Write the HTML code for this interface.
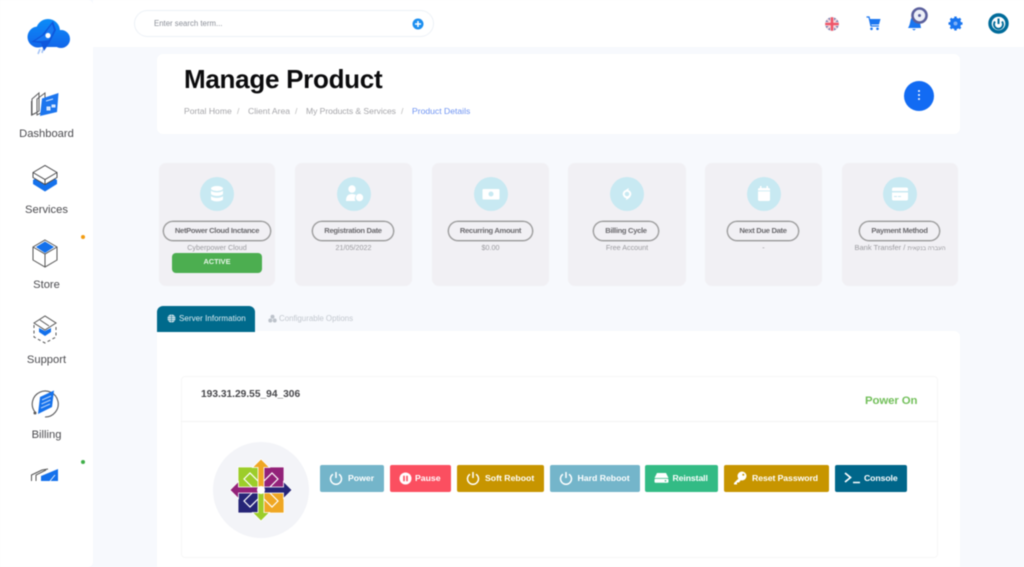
<!DOCTYPE html>
<html lang="en"><head><meta charset="utf-8"><title>Manage Product</title>
<style>
*{box-sizing:border-box}
html,body{margin:0;padding:0;width:1024px;height:567px;overflow:hidden;background:#f7f9fd}
body{font-family:"Liberation Sans","Noto Sans CJK JP",sans-serif;position:relative}
#w{position:absolute;left:0;top:0;width:1024px;height:567px;overflow:hidden;filter:blur(.45px)}
.a{position:absolute}
.t{position:absolute;white-space:nowrap;line-height:1}
.nav{position:absolute;left:0;width:93px;text-align:center;font-size:11.2px;color:#4b4b4f;line-height:1}
.card{position:absolute;top:163px;height:123px;background:#f1f0f4;border-radius:7px}
.circ{position:absolute;top:14px;left:50%;margin-left:-17px;width:34px;height:34px;border-radius:50%;background:#c8e9f2}
.circ svg{position:absolute;left:0;top:0}
.pill{position:absolute;top:58px;height:20px;border:1px solid #989898;border-radius:10px;box-shadow:0 0 0 .4px #999;text-align:center;font-size:7.6px;font-weight:bold;color:#6c6b6f;line-height:18px;white-space:nowrap;letter-spacing:-.32px}
.sub{position:absolute;top:81px;left:-10px;right:-10px;text-align:center;font-size:7.2px;color:#9a9a9e;line-height:1;white-space:nowrap}
.b{position:absolute;top:465px;height:27px;border-radius:2px;color:#fff;font-size:8.7px;font-weight:bold;line-height:27px;white-space:nowrap}
.b span{position:absolute;top:0}
.b svg{position:absolute}
.bc{font-size:8.6px;color:#a6a6aa;top:107px}
</style></head><body>
<div id="w">
<div class="a" style="left:93px;top:0;width:931px;height:47px;background:#fff"></div>
<div class="a" style="left:0;top:0;width:93px;height:567px;background:#fff;border-radius:0 5px 5px 0"></div>

<svg class="a" style="left:20px;top:14px" width="56" height="44" viewBox="0 0 56 44">
<defs><linearGradient id="g" gradientUnits="userSpaceOnUse" x1="0" y1="5" x2="0" y2="34"><stop offset="0" stop-color="#0c8cf8"/><stop offset="1" stop-color="#1266ea"/></linearGradient></defs>
<g fill="url(#g)"><circle cx="18" cy="23" r="10.500"/><circle cx="28" cy="17" r="12"/><circle cx="41" cy="25" r="9"/><rect x="18" y="22" width="23" height="11"/></g>
<path d="M33 7L22 21L11 28L21 29L24 37L30 28L36 16Z" fill="#0e57dc"/>
<path d="M32 10L24 21L15 27L22 27L29 26L34 16Z" fill="#1778f2"/>
<circle cx="28" cy="21.500" r="2.600" fill="#fff"/>
<path d="M20 35L18 40M23 35L22 39" stroke="#a4c4f6" stroke-width="1.600"/>
</svg>

<svg class="a" style="left:28px;top:88px" width="34" height="30" viewBox="0 0 34 30">
<g fill="none" stroke="#5c5c5e" stroke-width="1">
<path d="M4 11L11 5L11 23L4 27Z"/><path d="M3.500 13L3.500 27L8 25"/><path d="M9 11L17 5L17 23L9 27Z"/>
</g>
<path d="M14 10.500L30.500 5L29 24L12 28Z" fill="#1c75ee"/>
<path d="M18 13L25 11M19 19H22V22H19ZM24 17H27V19H24Z" stroke="#dcebff" stroke-width="1" fill="#cfe3ff"/>
</svg>
<div class="nav" style="top:128.500px">Dashboard</div>

<svg class="a" style="left:30px;top:164px" width="30" height="30" viewBox="0 0 30 30">
<path d="M3 16L15 9L27 16V20L15 27.500L3 20Z" fill="#1471ec"/>
<path d="M3 8.500L15 1.500L27 8.500V13.500L15 20.500L3 13.500Z" fill="#fff" stroke="#4c4c4e" stroke-width="1"/>
<path d="M3 8.500L15 15.500L27 8.500M15 15.500V20.500" stroke="#4c4c4e" stroke-width="1" fill="none"/>
</svg>
<div class="nav" style="top:204.500px">Services</div>

<svg class="a" style="left:31px;top:238px" width="28" height="30" viewBox="0 0 28 30">
<path d="M14 2L26 9V22L14 29L2 22V9Z" fill="#fff" stroke="#555" stroke-width="1"/>
<path d="M14 3.500L23 9L14 15L5 9Z" fill="#1471ec"/>
<path d="M2 9L14 16L26 9M14 16V29" stroke="#555" stroke-width="1" fill="none"/>
</svg>
<div class="nav" style="top:279.500px">Store</div>
<div class="a" style="left:81px;top:235px;width:4px;height:4px;border-radius:50%;background:#f39c12"></div>

<svg class="a" style="left:31px;top:314px" width="28" height="30" viewBox="0 0 28 30">
<path d="M3 11V23L14 29L25 23V11" fill="none" stroke="#555" stroke-width="1" stroke-dasharray="3 2.500"/>
<path d="M8 14L14 17L20 14V18L14 22L8 18Z" fill="#1471ec"/>
<path d="M3 9L14 2L25 9L14 16Z" fill="#fff" stroke="#555" stroke-width="1"/>
<path d="M9 6L18 12" stroke="#555" stroke-width="1"/>
</svg>
<div class="nav" style="top:354.500px">Support</div>

<svg class="a" style="left:30px;top:389px" width="30" height="30" viewBox="0 0 30 30">
<path d="M5 23A13 13 0 1 1 15 28" fill="none" stroke="#5a5a5c" stroke-width="1.100"/>
<circle cx="5" cy="24" r="1.500" fill="#5a5a5c"/>
<path d="M10 8L24 1.500L22 18L8 25Z" fill="#1471ec"/>
<path d="M12 11L21 7M11.500 15L20.500 11M11 19L20 15" stroke="#bcd6fb" stroke-width="1"/>
</svg>
<div class="nav" style="top:429.500px">Billing</div>
<div class="a" style="left:81px;top:460px;width:4px;height:4px;border-radius:50%;background:#3fae49"></div>

<svg class="a" style="left:30px;top:466px" width="30" height="15" viewBox="0 0 30 15">
<path d="M1.500 15V9L12 4L18 3" fill="none" stroke="#555" stroke-width="1"/>
<path d="M6 15V9L16 4" fill="none" stroke="#555" stroke-width="1"/>
<path d="M11 15V10L28 3V15Z" fill="#1471ec"/>
<path d="M20 15L25 9" stroke="#fff" stroke-width=".8"/>
</svg>

<div class="a" style="left:134px;top:10px;width:300px;height:27px;border:1px solid #edf1f7;border-radius:14px;background:#fff"></div>
<div class="t" style="left:154px;top:19.500px;font-size:7.800px;color:#8b8f98">Enter search term...</div>
<svg class="a" style="left:412px;top:17.500px" width="12" height="12" viewBox="0 0 12 12"><circle cx="6" cy="6" r="5.500" fill="#1c8ff0"/><path d="M3 6H9M6 3V9" stroke="#fff" stroke-width="1.500"/></svg>

<svg class="a" style="left:825px;top:17px" width="14" height="14" viewBox="0 0 14 14">
<defs><clipPath id="f"><circle cx="7" cy="7" r="6.800"/></clipPath></defs>
<g clip-path="url(#f)"><rect width="14" height="14" fill="#767cae"/>
<path d="M0 0L14 14M14 0L0 14" stroke="#f4d5da" stroke-width="2"/>
<path d="M7 0V14M0 7H14" stroke="#f7e4e6" stroke-width="4"/>
<path d="M7 0V14M0 7H14" stroke="#ef5568" stroke-width="2.600"/></g>
</svg>
<svg class="a" style="left:866px;top:16px" width="15" height="15" viewBox="0 0 15 15">
<path d="M.5 1H3L5 10H13" fill="none" stroke="#1975f0" stroke-width="1.300"/>
<path d="M3.500 3H14.500L13 8.500H4.500Z" fill="#1975f0"/>
<circle cx="5.500" cy="12.800" r="1.300" fill="#1975f0"/><circle cx="11.500" cy="12.800" r="1.300" fill="#1975f0"/>
</svg>
<svg class="a" style="left:906px;top:7px" width="24" height="25" viewBox="0 0 24 25">
<path d="M2 21C4 18 4 15 5 12C6 9 9 9 11 10C13 11 14 15 15 21Z" fill="#1975f0"/>
<path d="M6 22H10L8 23.500Z" fill="#1975f0"/>
<circle cx="13.500" cy="8.500" r="7" fill="#eef0f7" stroke="#5a5f9c" stroke-width="2.600"/>
<circle cx="13.500" cy="8.500" r="1.500" fill="#5a5f9c"/>
</svg>
<svg class="a" style="left:947.500px;top:16px" width="15" height="15" viewBox="0 0 15 15">
<circle cx="7.500" cy="7.500" r="5.600" fill="#1975f0"/>
<path d="M7.500 .5V14.500M.5 7.500H14.500M2.500 2.500L12.500 12.500M12.500 2.500L2.500 12.500" stroke="#1975f0" stroke-width="2.400"/>
<circle cx="7.500" cy="7.500" r="2" fill="#7fb0f7"/>
</svg>
<svg class="a" style="left:987.500px;top:12.500px" width="21" height="21" viewBox="0 0 21 21">
<circle cx="10.500" cy="10.500" r="8.500" fill="#fff" stroke="#006b9a" stroke-width="3.400"/>
<path d="M7 8.500A4.500 4.500 0 1 0 14 8.500" fill="none" stroke="#006b9a" stroke-width="2"/>
<path d="M10.500 5.500V11" stroke="#006b9a" stroke-width="2"/>
</svg>

<div class="a" style="left:157px;top:54px;width:803px;height:80px;background:#fff;border-radius:6px"></div>
<div class="t" style="left:184px;top:66px;font-size:26px;font-weight:bold;color:#0b0b0d;letter-spacing:-.28px">Manage Product</div>
<div class="t bc" style="left:184px">Portal Home</div>
<div class="t bc" style="left:237px;color:#bbb">/</div>
<div class="t bc" style="left:248px">Client Area</div>
<div class="t bc" style="left:295px;color:#bbb">/</div>
<div class="t bc" style="left:306px;letter-spacing:-.06px">My Products &amp; Services</div>
<div class="t bc" style="left:401px;color:#bbb">/</div>
<div class="t bc" style="left:412px;color:#6f94f2">Product Details</div>

<div class="a" style="left:904px;top:80.500px;width:30px;height:30px;border-radius:50%;background:#126bf3"></div>
<div class="a" style="left:918px;top:90px;width:2px;height:2px;background:#fff;border-radius:50%;box-shadow:0 4px 0 #fff,0 8px 0 #fff"></div>

<div class="card" style="left:159px;width:116px">
<div class="circ"><svg width="34" height="34" viewBox="0 0 34 34"><ellipse cx="17" cy="11.500" rx="6" ry="2.500" fill="#fff"/><path d="M11 13.500C13 16 21 16 23 13.500V17C21 19.500 13 19.500 11 17Z" fill="#fff"/><path d="M11 19C13 21.500 21 21.500 23 19V22.500C21 25 13 25 11 22.500Z" fill="#fff"/></svg></div>
<div class="pill" style="left:4px;width:108px">NetPower Cloud Inctance</div>
<div class="sub">Cyberpower Cloud</div>
<div class="a" style="left:13px;top:90px;width:90px;height:20px;background:#4cae50;border-radius:4px;color:#e8f6e8;font-size:7.400px;font-weight:bold;text-align:center;line-height:18px">ACTIVE</div>
</div>

<div class="card" style="left:295px;width:117px">
<div class="circ"><svg width="34" height="34" viewBox="0 0 34 34"><circle cx="15" cy="12" r="3.700" fill="#fff"/><path d="M9 24C9 19 11 17 15 17C17 17 18 17.500 19 18C17.500 20 17.500 22.500 18.500 24Z" fill="#fff"/><circle cx="22.500" cy="20.500" r="3.700" fill="#fff"/></svg></div>
<div class="pill" style="left:17px;width:82px">Registration Date</div>
<div class="sub">21/05/2022</div>
</div>

<div class="card" style="left:432px;width:117px">
<div class="circ"><svg width="34" height="34" viewBox="0 0 34 34"><rect x="8.500" y="12" width="17" height="10.500" rx="1" fill="#fff"/><circle cx="17" cy="17" r="2.500" fill="#c8e9f2"/></svg></div>
<div class="pill" style="left:16px;width:85px">Recurring Amount</div>
<div class="sub">$0.00</div>
</div>

<div class="card" style="left:568px;width:118px">
<div class="circ"><svg width="34" height="34" viewBox="0 0 34 34"><circle cx="17" cy="17" r="3.300" fill="none" stroke="#fff" stroke-width="2"/><path d="M15 15C15 13 17 12 19 11L18 14ZM20 19C20 21 18 22 16 23L16.500 20Z" fill="#fff"/></svg></div>
<div class="pill" style="left:25px;width:66px">Billing Cycle</div>
<div class="sub">Free Account</div>
</div>

<div class="card" style="left:705px;width:117px">
<div class="circ"><svg width="34" height="34" viewBox="0 0 34 34"><rect x="11" y="11" width="12" height="13" rx="1.500" fill="#fff"/><rect x="13" y="9" width="1.500" height="3" fill="#fff"/><rect x="19.500" y="9" width="1.500" height="3" fill="#fff"/><rect x="11" y="13.500" width="12" height=".8" fill="#c8e9f2"/></svg></div>
<div class="pill" style="left:22px;width:72px">Next Due Date</div>
<div class="sub">-</div>
</div>

<div class="card" style="left:842px;width:116px">
<div class="circ"><svg width="34" height="34" viewBox="0 0 34 34"><rect x="9" y="10.500" width="16" height="13" rx="1.500" fill="#fff"/><rect x="9" y="14" width="16" height="1.500" fill="#c8e9f2"/><rect x="11" y="19" width="3" height="1" fill="#c8e9f2"/><rect x="15" y="19" width="3" height="1" fill="#c8e9f2"/></svg></div>
<div class="pill" style="left:17px;width:81px">Payment Method</div>
<div class="sub" style="font-size:7.500px">Bank Transfer / <span style="font-size:6px">העברה בנקאית</span></div>
</div>

<div class="a" style="left:157px;top:331px;width:803px;height:240px;background:#fff;border-radius:0 6px 0 0"></div>
<div class="a" style="left:157px;top:306px;width:98px;height:25.500px;background:#006a8c;border-radius:6px 6px 0 0"></div>
<svg class="a" style="left:167px;top:314px" width="9" height="9" viewBox="0 0 9 9"><circle cx="4.500" cy="4.500" r="4" fill="#e4eff3"/><path d="M.5 4.500H8.500M1 2.500H8M1 6.500H8M4.500 .5V8.500" stroke="#006a8c" stroke-width=".5"/></svg>
<div class="t" style="left:179px;top:314.500px;font-size:8px;color:#dcecf1;letter-spacing:.05px">Server Information</div>
<svg class="a" style="left:268px;top:314px" width="9" height="9" viewBox="0 0 9 9"><circle cx="4.500" cy="2.800" r="2" fill="#bcc2ca"/><circle cx="2.300" cy="6.500" r="2" fill="#bcc2ca"/><circle cx="6.700" cy="6.500" r="2" fill="#bcc2ca"/></svg>
<div class="t" style="left:279px;top:315px;font-size:7.900px;color:#c3c8cf">Configurable Options</div>

<div class="a" style="left:181px;top:376px;width:757px;height:182px;background:#fff;border:1px solid #f7f7f7;border-radius:4px"></div>
<div class="a" style="left:181px;top:421px;width:757px;height:1px;background:#f3f3f3"></div>
<div class="t" style="left:201px;top:390px;font-size:10.200px;font-weight:bold;color:#47474b">193.31.29.55_94_306</div>
<div class="t" style="left:865px;top:396px;font-size:11.400px;font-weight:bold;color:#72bf5a;letter-spacing:-.1px">Power On</div>

<div class="a" style="left:213px;top:442px;width:96px;height:96px;border-radius:50%;background:#f3f4f8"></div>
<svg class="a" style="left:227.500px;top:456.500px" width="66" height="66" viewBox="0 0 66 66">
<g stroke="#fff" stroke-width=".8">
<path d="M10 10H31V31H10Z" fill="#9ccd2a"/>
<path d="M35 10H56V31H35Z" fill="#932279"/>
<path d="M35 35H56V56H35Z" fill="#efa724"/>
<path d="M10 35H31V56H10Z" fill="#262577"/>
<path d="M33 2L41.500 10.500H36V30H30V10.500H24.500Z" fill="#efa724"/>
<path d="M64 33L55.500 41.500V36H36V30H55.500V24.500Z" fill="#262577"/>
<path d="M33 64L24.500 55.500H30V36H36V55.500H41.500Z" fill="#9ccd2a"/>
<path d="M2 33L10.500 24.500V30H30V36H10.500V41.500Z" fill="#932279"/>
</g>
<g stroke="#fff" stroke-width="1.200" fill="none" transform="translate(33 33)">
<path d="M-3 -9L-11 -17L-17 -11L-9 -3"/>
<path d="M3 -9L11 -17L17 -11L9 -3"/>
<path d="M3 9L11 17L17 11L9 3"/>
<path d="M-3 9L-11 17L-17 11L-9 3"/>
</g>
<circle cx="33" cy="33" r="4" fill="#fff"/>
</svg>

<div class="b" style="left:320px;width:64px;background:#74b5ca"><svg style="left:9px;top:6px" width="14" height="14" viewBox="0 0 14 14"><path d="M4 3.200A5.500 5.500 0 1 0 10 3.200" fill="none" stroke="#fff" stroke-width="1.500"/><path d="M7 1V7" stroke="#fff" stroke-width="1.500"/></svg><span style="left:28px">Power</span></div>
<div class="b" style="left:390px;width:61px;background:#fb4f60"><svg style="left:9px;top:6.500px" width="13" height="13" viewBox="0 0 13 13"><circle cx="6.500" cy="6.500" r="6" fill="#fff"/><path d="M4.200 3.800H5.800V9.200H4.200ZM7.200 3.800H8.800V9.200H7.200Z" fill="#fb4f60"/></svg><span style="left:25px">Pause</span></div>
<div class="b" style="left:457px;width:87px;background:#c79500"><svg style="left:9px;top:6px" width="14" height="14" viewBox="0 0 14 14"><path d="M4 3.200A5.500 5.500 0 1 0 10 3.200" fill="none" stroke="#fff" stroke-width="1.500"/><path d="M7 1V7" stroke="#fff" stroke-width="1.500"/></svg><span style="left:28px">Soft Reboot</span></div>
<div class="b" style="left:550px;width:90px;background:#74b5ca"><svg style="left:9px;top:6px" width="14" height="14" viewBox="0 0 14 14"><path d="M4 3.200A5.500 5.500 0 1 0 10 3.200" fill="none" stroke="#fff" stroke-width="1.500"/><path d="M7 1V7" stroke="#fff" stroke-width="1.500"/></svg><span style="left:27.500px">Hard Reboot</span></div>
<div class="b" style="left:645px;width:73px;background:#33bb85"><svg style="left:9px;top:7px" width="15" height="12" viewBox="0 0 15 12"><path d="M3 1H12L14.500 6H.5Z" fill="#fff"/><rect x=".5" y="6.800" width="14" height="4" rx="1" fill="#fff"/><circle cx="11.500" cy="8.800" r=".8" fill="#33bb85"/></svg><span style="left:27.500px;letter-spacing:-.1px">Reinstall</span></div>
<div class="b" style="left:724px;width:105px;background:#c79500"><svg style="left:9px;top:6px" width="14" height="14" viewBox="0 0 14 14"><circle cx="9" cy="5" r="4.500" fill="#fff"/><path d="M6 7L1 12V13.500H4V11.500H6L8 9Z" fill="#fff"/><circle cx="10.300" cy="3.700" r="1" fill="#c79500"/></svg><span style="left:28px;letter-spacing:-.08px">Reset Password</span></div>
<div class="b" style="left:835px;width:72px;background:#00668a"><svg style="left:9px;top:7px" width="17" height="12" viewBox="0 0 17 12"><path d="M1 1L6.500 5.500L1 10" fill="none" stroke="#fff" stroke-width="1.700"/><path d="M9 10.500H16" stroke="#fff" stroke-width="1.500"/></svg><span style="left:29px;letter-spacing:-.1px">Console</span></div>
</div>
</body></html>
